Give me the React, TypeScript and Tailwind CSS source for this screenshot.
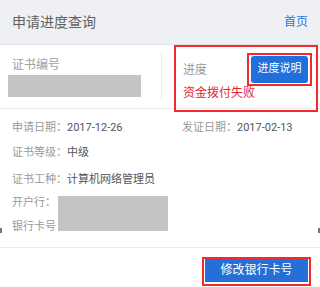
import React from 'react';

// 申请进度查询 页面
const InfoRow = ({ label, value, className = '' }: { label: string; value?: string; className?: string }) => (
  <div className={`flex items-center h-[24px] text-[11px] leading-[24px] ${className}`}>
    <span className="text-[#9a9a9a]">{label}</span>
    {value && <span className="text-[#555]">{value}</span>}
  </div>
);

export default function App() {
  return (
    <div
      className="relative w-[320px] h-[287px] bg-white overflow-hidden"
      style={{ fontFamily: 'Roboto, "Noto Sans CJK SC", sans-serif' }}
    >
      {/* 顶部标题栏 */}
      <div className="h-[45px] bg-[#eff0f4] border-b border-[#e2e3e8] flex items-center justify-between pl-3 pr-3">
        <span className="text-[14px] text-[#606060]">申请进度查询</span>
        <span className="text-[12px] text-[#2d78dc]">首页</span>
      </div>

      {/* 证书编号 / 进度 */}
      <div className="flex h-[64px] border-b border-[#ebebeb]">
        <div className="w-[161px] pl-2 pt-[11px]">
          <div className="pl-1 h-[18px] text-[12px] leading-[18px] text-[#a0a0a0]">证书编号</div>
          <div className="mt-px h-[22px] w-[133px] bg-[#c4c4c4]" />
        </div>
        <div className="w-px h-[48px] mt-[7px] bg-[#ececec]" />
        <div className="flex-1 pl-[21px] pr-3 pt-[11px]">
          <div className="flex items-center justify-between h-[27px]">
            <span className="text-[12px] text-[#9a9a9a]">进度</span>
            <button className="w-[57px] h-[27px] rounded-[3px] bg-[#1f6fdc] text-white text-[11px]">进度说明</button>
          </div>
          <div className="h-[20px] leading-[20px] text-[12px] text-[#e3262d]">资金拨付失败</div>
        </div>
      </div>

      {/* 证书信息 */}
      <div className="pl-3 pt-[7px] h-[139px] border-b border-[#ebebeb]">
        <div className="flex">
          <InfoRow label="申请日期：" value="2017-12-26" className="w-[170px]" />
          <InfoRow label="发证日期：" value="2017-02-13" />
        </div>
        <InfoRow label="证书等级：" value="中级" className="mt-px" />
        <InfoRow label="证书工种：" value="计算机网络管理员" className="mt-[3px]" />
        <div className="flex">
          <div className="-mt-px">
            <InfoRow label="开户行：" />
            <InfoRow label="银行卡号" />
          </div>
          <div className="ml-[2px] mt-[4px] w-[110px] h-[35px] bg-[#c4c4c4]" />
        </div>
      </div>

      {/* 操作按钮 */}
      <div className="flex justify-end pr-3 pt-[10px]">
        <button className="w-[103px] h-[24px] bg-[#2470d8] text-white text-[12px]">修改银行卡号</button>
      </div>

      {/* 红色标注框 */}
      <div className="absolute left-[174px] top-[45px] w-[144px] h-[67px] border-2 border-[#f2292d]" />
      <div className="absolute left-[247px] top-[53px] w-[65px] h-[33px] border-2 border-[#f2292d]" />
      <div className="absolute left-[202px] top-[257px] w-[109px] h-[29px] border-2 border-[#f2292d]" />

      {/* 滚动边缘标记 */}
      <div className="absolute left-0 top-[228px] w-[2px] h-[5px] bg-[#777]" />
      <div className="absolute right-0 top-[228px] w-[2px] h-[5px] bg-[#777]" />
    </div>
  );
}
